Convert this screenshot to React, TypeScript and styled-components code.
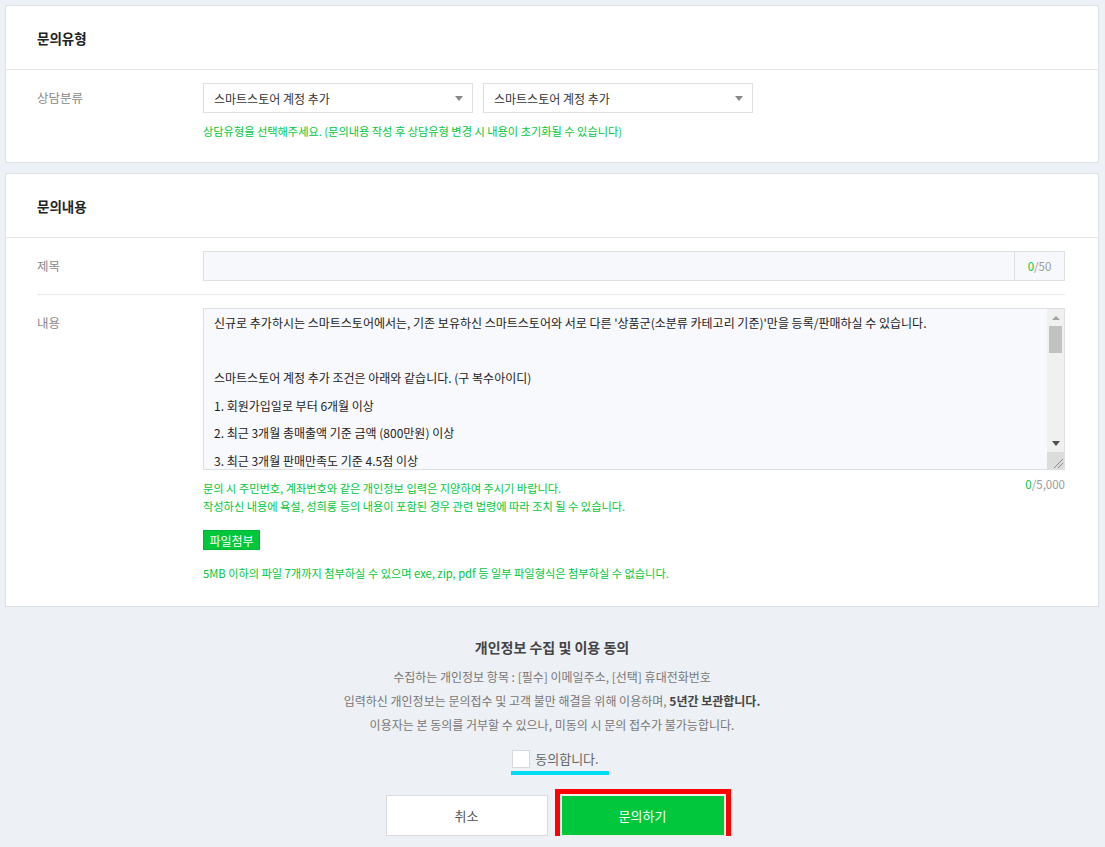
import React from "react";
import styled, { createGlobalStyle } from "styled-components";

const GlobalStyle = createGlobalStyle`
  html, body { margin: 0; padding: 0; }
  body {
    background: #edf0f4;
    font-family: "Noto Sans CJK KR", "Noto Sans", sans-serif;
    color: #333;
  }
  * { box-sizing: border-box; }
`;

const GREEN = "#00c73c";

const Page = styled.div`
  display: flex;
  flex-direction: column;
  gap: 10px;
  padding: 5px 6px 0 5px;
`;

const Card = styled.section`
  background: #fff;
  border: 1px solid #dcdfe4;
`;

const CardHeader = styled.h2`
  margin: 0;
  height: 64px;
  display: flex;
  align-items: center;
  padding-left: 31px;
  border-bottom: 1px solid #e4e6ea;
  font-size: 13.5px;
  font-weight: 700;
  color: #222;
`;

const CardBody = styled.div<{ $pb: number }>`
  padding: 0 33px ${(p) => p.$pb}px 31px;
`;

const Row = styled.div<{ $divider?: boolean }>`
  display: grid;
  grid-template-columns: 166px 1fr;
  padding-top: 13px;
  border-top: ${(p) => (p.$divider ? "1px solid #e8eaee" : "none")};
`;

const Label = styled.div`
  font-size: 12.5px;
  color: #888;
  line-height: 30px;
`;

const Field = styled.div`
  display: flex;
  flex-direction: column;
  min-width: 0;
`;

const SelectGroup = styled.div`
  display: flex;
  gap: 10px;
`;

const SelectBox = styled.div`
  width: 270px;
  height: 30px;
  border: 1px solid #dcdfe4;
  background: #fff;
  display: flex;
  align-items: center;
  justify-content: space-between;
  padding: 0 9px 0 10px;
  font-size: 12px;
  color: #333;
`;

const Caret = styled.span<{ $dir?: "up" | "down"; $color?: string }>`
  width: 0;
  height: 0;
  border-left: 4.5px solid transparent;
  border-right: 4.5px solid transparent;
  ${(p) =>
    p.$dir === "up"
      ? `border-bottom: 4.5px solid ${p.$color || "#888"};`
      : `border-top: 5px solid ${p.$color || "#888"};`}
`;

const Help = styled.p<{ $mt: number }>`
  margin: ${(p) => p.$mt}px 0 0;
  font-size: 11.2px;
  line-height: 18px;
  color: ${GREEN};
`;

const TitleInput = styled.div`
  display: flex;
  height: 30px;
  border: 1px solid #dcdfe4;
  background: #f7f8fb;
`;

const InputArea = styled.input`
  flex: 1;
  border: none;
  background: transparent;
  outline: none;
  padding: 0 10px;
  font-family: inherit;
  font-size: 12px;
`;

const LimitBox = styled.div`
  width: 50px;
  border-left: 1px solid #dcdfe4;
  display: flex;
  align-items: center;
  justify-content: center;
  font-size: 11.5px;
  color: #999;
`;

const Hit = styled.span`
  color: ${GREEN};
`;

const TitleRowWrap = styled.div`
  padding-bottom: 13px;
`;

const TextBox = styled.div`
  display: flex;
  height: 162px;
  border: 1px solid #dcdfe4;
  background: #f8f9fc;
`;

const TextArea = styled.textarea`
  flex: 1;
  border: none;
  outline: none;
  resize: none;
  overflow: hidden;
  background: transparent;
  padding: 0 10px;
  font-family: inherit;
  font-size: 12px;
  line-height: 27.5px;
  color: #222;
`;

const ScrollBar = styled.div`
  width: 17px;
  display: flex;
  flex-direction: column;
  background: #f0f0f0;
`;

const ScrollBtn = styled.div`
  height: 17px;
  display: flex;
  align-items: center;
  justify-content: center;
`;

const Thumb = styled.div`
  height: 27px;
  margin: 0 2px;
  background: #c1c1c1;
`;

const Track = styled.div`
  flex: 1;
`;

const Grip = styled.div`
  height: 17px;
  background: #dcdcdc;
  display: flex;
  align-items: flex-end;
  justify-content: flex-end;
`;

const UnderRow = styled.div`
  display: flex;
  justify-content: space-between;
  align-items: flex-start;
`;

const Notes = styled.div`
  margin-top: 9px;
  font-size: 11.2px;
  line-height: 18px;
  color: ${GREEN};
`;

const BigCounter = styled.div`
  margin-top: 5px;
  font-size: 11.5px;
  line-height: 18px;
  color: #999;
`;

const FileButton = styled.button`
  align-self: flex-start;
  margin-top: 15px;
  height: 20px;
  width: 57px;
  padding: 0;
  border: 1px solid #00b835;
  background: ${GREEN};
  color: #fff;
  font-family: inherit;
  font-size: 12px;
  cursor: pointer;
`;

const Agree = styled.section`
  display: flex;
  flex-direction: column;
  align-items: center;
  padding-top: 20px;
`;

const AgreeTitle = styled.h3`
  margin: 0;
  font-size: 14px;
  line-height: 20px;
  font-weight: 700;
  color: #444;
`;

const AgreeText = styled.div`
  margin-top: 8px;
  font-size: 12px;
  line-height: 24px;
  color: #777;
  text-align: center;

  b {
    color: #444;
    font-weight: 700;
  }
`;

const AgreeLabel = styled.label`
  margin-top: 12px;
  margin-left: 16px;
  display: inline-flex;
  align-items: center;
  gap: 5px;
  padding: 0 10px 3px 1px;
  border-bottom: 4px solid #00dcf3;
  font-size: 13px;
  color: #666;
  cursor: pointer;
`;

const CheckBox = styled.span`
  width: 18px;
  height: 18px;
  background: #fff;
  border: 1px solid #d6d9de;
`;

const Buttons = styled.div`
  margin-top: 20px;
  margin-left: 6px;
  display: flex;
  gap: 13px;
`;

const BaseButton = styled.button`
  width: 162px;
  height: 41px;
  font-family: inherit;
  font-size: 13px;
  cursor: pointer;
`;

const CancelButton = styled(BaseButton)`
  background: #fff;
  border: 1px solid #d7dae0;
  color: #555;
`;

const SubmitButton = styled(BaseButton)`
  width: 164px;
  background: ${GREEN};
  border: 1px solid #e6f2e6;
  color: #fff;
  outline: 5px solid #ff0000;
  outline-offset: 1px;
`;

const content = `신규로 추가하시는 스마트스토어에서는, 기존 보유하신 스마트스토어와 서로 다른 '상품군(소분류 카테고리 기준)'만을 등록/판매하실 수 있습니다.

스마트스토어 계정 추가 조건은 아래와 같습니다. (구 복수아이디)
1. 회원가입일로 부터 6개월 이상
2. 최근 3개월 총매출액 기준 금액 (800만원) 이상
3. 최근 3개월 판매만족도 기준 4.5점 이상
4. 최근 3개월 페널티 비율 기준 미충족 없음`;

export default function App() {
  return (
    <>
      <GlobalStyle />
      <Page>
        <Card>
          <CardHeader>문의유형</CardHeader>
          <CardBody $pb={22}>
            <Row>
              <Label>상담분류</Label>
              <Field>
                <SelectGroup>
                  <SelectBox>
                    <span>스마트스토어 계정 추가</span>
                    <Caret />
                  </SelectBox>
                  <SelectBox>
                    <span>스마트스토어 계정 추가</span>
                    <Caret />
                  </SelectBox>
                </SelectGroup>
                <Help $mt={9}>
                  상담유형을 선택해주세요. (문의내용 작성 후 상담유형 변경 시 내용이 초기화될 수 있습니다)
                </Help>
              </Field>
            </Row>
          </CardBody>
        </Card>

        <Card>
          <CardHeader>문의내용</CardHeader>
          <CardBody $pb={24}>
            <Row>
              <Label>제목</Label>
              <TitleRowWrap>
                <TitleInput>
                  <InputArea aria-label="제목" />
                  <LimitBox>
                    <Hit>0</Hit>/50
                  </LimitBox>
                </TitleInput>
              </TitleRowWrap>
            </Row>
            <Row $divider>
              <Label>내용</Label>
              <Field>
                <TextBox>
                  <TextArea defaultValue={content} aria-label="내용" />
                  <ScrollBar>
                    <ScrollBtn>
                      <Caret $dir="up" $color="#a3a3a3" />
                    </ScrollBtn>
                    <Thumb />
                    <Track />
                    <ScrollBtn>
                      <Caret $dir="down" $color="#505050" />
                    </ScrollBtn>
                    <Grip>
                      <svg width="12" height="12" viewBox="0 0 12 12">
                        <path d="M2 11 L11 2 M6 11 L11 6" stroke="#8a8a8a" strokeWidth="1" />
                      </svg>
                    </Grip>
                  </ScrollBar>
                </TextBox>
                <UnderRow>
                  <Notes>
                    문의 시 주민번호, 계좌번호와 같은 개인정보 입력은 지양하여 주시기 바랍니다.
                    <br />
                    작성하신 내용에 욕설, 성희롱 등의 내용이 포함된 경우 관련 법령에 따라 조치 될 수 있습니다.
                  </Notes>
                  <BigCounter>
                    <Hit>0</Hit>/5,000
                  </BigCounter>
                </UnderRow>
                <FileButton type="button">파일첨부</FileButton>
                <Help $mt={14}>
                  5MB 이하의 파일 7개까지 첨부하실 수 있으며 exe, zip, pdf 등 일부 파일형식은 첨부하실 수 없습니다.
                </Help>
              </Field>
            </Row>
          </CardBody>
        </Card>

        <Agree>
          <AgreeTitle>개인정보 수집 및 이용 동의</AgreeTitle>
          <AgreeText>
            수집하는 개인정보 항목 : [필수] 이메일주소, [선택] 휴대전화번호
            <br />
            입력하신 개인정보는 문의접수 및 고객 불만 해결을 위해 이용하며, <b>5년간 보관합니다.</b>
            <br />
            이용자는 본 동의를 거부할 수 있으나, 미동의 시 문의 접수가 불가능합니다.
          </AgreeText>
          <AgreeLabel>
            <CheckBox />
            동의합니다.
          </AgreeLabel>
          <Buttons>
            <CancelButton type="button">취소</CancelButton>
            <SubmitButton type="button">문의하기</SubmitButton>
          </Buttons>
        </Agree>
      </Page>
    </>
  );
}
